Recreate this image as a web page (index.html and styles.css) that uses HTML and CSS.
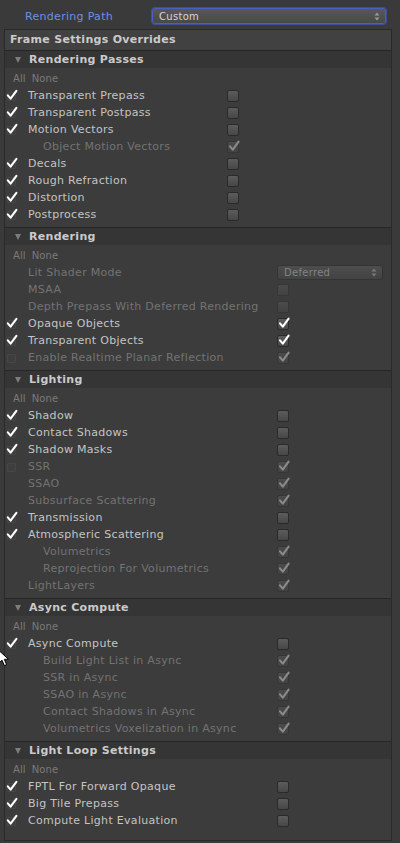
FILE: index.html
```html
<!DOCTYPE html>
<html>
<head>
<meta charset="utf-8">
<link rel="stylesheet" href="styles.css">
</head>
<body>
<div class="page">
  <div class="top">
    <span class="path-label">Rendering Path</span>
    <div class="select main"><span class="sel-text">Custom</span><svg class="arrows" width="6" height="9" viewBox="0 0 6 9"><path d="M3 0.5 L5.5 3.5 H0.5Z M3 8.5 L5.5 5.5 H0.5Z" fill="#9a9a9a"/></svg></div>
  </div>

  <div class="panel">
    <div class="panel-head">Frame Settings Overrides</div>

    <section class="sec s1">
      <div class="sec-head"><i class="tri"></i>Rendering Passes</div>
      <div class="allnone"><span>All</span><span>None</span></div>
      <div class="row"><span class="ov on"><svg viewBox="0 0 12 12"><path d="M1.8 6.4 L4.6 9.6 L10.4 1.8"/></svg></span><span class="lbl">Transparent Prepass</span><span class="cb"></span></div>
      <div class="row"><span class="ov on"><svg viewBox="0 0 12 12"><path d="M1.8 6.4 L4.6 9.6 L10.4 1.8"/></svg></span><span class="lbl">Transparent Postpass</span><span class="cb"></span></div>
      <div class="row"><span class="ov on"><svg viewBox="0 0 12 12"><path d="M1.8 6.4 L4.6 9.6 L10.4 1.8"/></svg></span><span class="lbl">Motion Vectors</span><span class="cb"></span></div>
      <div class="row dis"><span class="ov"></span><span class="lbl ind">Object Motion Vectors</span><span class="cb dim"><svg viewBox="0 0 14 14"><path d="M3 7.4 L5.8 10.6 L11.6 2.6"/></svg></span></div>
      <div class="row"><span class="ov on"><svg viewBox="0 0 12 12"><path d="M1.8 6.4 L4.6 9.6 L10.4 1.8"/></svg></span><span class="lbl">Decals</span><span class="cb"></span></div>
      <div class="row"><span class="ov on"><svg viewBox="0 0 12 12"><path d="M1.8 6.4 L4.6 9.6 L10.4 1.8"/></svg></span><span class="lbl">Rough Refraction</span><span class="cb"></span></div>
      <div class="row"><span class="ov on"><svg viewBox="0 0 12 12"><path d="M1.8 6.4 L4.6 9.6 L10.4 1.8"/></svg></span><span class="lbl">Distortion</span><span class="cb"></span></div>
      <div class="row"><span class="ov on"><svg viewBox="0 0 12 12"><path d="M1.8 6.4 L4.6 9.6 L10.4 1.8"/></svg></span><span class="lbl">Postprocess</span><span class="cb"></span></div>
    </section>

    <section class="sec">
      <div class="sec-head"><i class="tri"></i>Rendering</div>
      <div class="allnone"><span>All</span><span>None</span></div>
      <div class="row dis"><span class="ov"></span><span class="lbl">Lit Shader Mode</span><div class="select small"><span class="sel-text">Deferred</span><svg class="arrows" width="6" height="9" viewBox="0 0 6 9"><path d="M3 0.5 L5.5 3.5 H0.5Z M3 8.5 L5.5 5.5 H0.5Z" fill="#7a7a7a"/></svg></div></div>
      <div class="row dis"><span class="ov"></span><span class="lbl">MSAA</span><span class="cb dim"></span></div>
      <div class="row dis"><span class="ov"></span><span class="lbl">Depth Prepass With Deferred Rendering</span><span class="cb dim"></span></div>
      <div class="row"><span class="ov on"><svg viewBox="0 0 12 12"><path d="M1.8 6.4 L4.6 9.6 L10.4 1.8"/></svg></span><span class="lbl">Opaque Objects</span><span class="cb"><svg viewBox="0 0 14 14"><path d="M3 7.4 L5.8 10.6 L11.6 2.6"/></svg></span></div>
      <div class="row"><span class="ov on"><svg viewBox="0 0 12 12"><path d="M1.8 6.4 L4.6 9.6 L10.4 1.8"/></svg></span><span class="lbl">Transparent Objects</span><span class="cb"><svg viewBox="0 0 14 14"><path d="M3 7.4 L5.8 10.6 L11.6 2.6"/></svg></span></div>
      <div class="row dis"><span class="ov off"></span><span class="lbl">Enable Realtime Planar Reflection</span><span class="cb dim"><svg viewBox="0 0 14 14"><path d="M3 7.4 L5.8 10.6 L11.6 2.6"/></svg></span></div>
    </section>

    <section class="sec">
      <div class="sec-head"><i class="tri"></i>Lighting</div>
      <div class="allnone"><span>All</span><span>None</span></div>
      <div class="row"><span class="ov on"><svg viewBox="0 0 12 12"><path d="M1.8 6.4 L4.6 9.6 L10.4 1.8"/></svg></span><span class="lbl">Shadow</span><span class="cb"></span></div>
      <div class="row"><span class="ov on"><svg viewBox="0 0 12 12"><path d="M1.8 6.4 L4.6 9.6 L10.4 1.8"/></svg></span><span class="lbl">Contact Shadows</span><span class="cb"></span></div>
      <div class="row"><span class="ov on"><svg viewBox="0 0 12 12"><path d="M1.8 6.4 L4.6 9.6 L10.4 1.8"/></svg></span><span class="lbl">Shadow Masks</span><span class="cb"></span></div>
      <div class="row dis"><span class="ov off"></span><span class="lbl">SSR</span><span class="cb dim"><svg viewBox="0 0 14 14"><path d="M3 7.4 L5.8 10.6 L11.6 2.6"/></svg></span></div>
      <div class="row dis"><span class="ov"></span><span class="lbl">SSAO</span><span class="cb dim"><svg viewBox="0 0 14 14"><path d="M3 7.4 L5.8 10.6 L11.6 2.6"/></svg></span></div>
      <div class="row dis"><span class="ov"></span><span class="lbl">Subsurface Scattering</span><span class="cb dim"><svg viewBox="0 0 14 14"><path d="M3 7.4 L5.8 10.6 L11.6 2.6"/></svg></span></div>
      <div class="row"><span class="ov on"><svg viewBox="0 0 12 12"><path d="M1.8 6.4 L4.6 9.6 L10.4 1.8"/></svg></span><span class="lbl">Transmission</span><span class="cb"></span></div>
      <div class="row"><span class="ov on"><svg viewBox="0 0 12 12"><path d="M1.8 6.4 L4.6 9.6 L10.4 1.8"/></svg></span><span class="lbl">Atmospheric Scattering</span><span class="cb"></span></div>
      <div class="row dis"><span class="ov"></span><span class="lbl ind">Volumetrics</span><span class="cb dim"><svg viewBox="0 0 14 14"><path d="M3 7.4 L5.8 10.6 L11.6 2.6"/></svg></span></div>
      <div class="row dis"><span class="ov"></span><span class="lbl ind">Reprojection For Volumetrics</span><span class="cb dim"><svg viewBox="0 0 14 14"><path d="M3 7.4 L5.8 10.6 L11.6 2.6"/></svg></span></div>
      <div class="row dis"><span class="ov"></span><span class="lbl">LightLayers</span><span class="cb dim"><svg viewBox="0 0 14 14"><path d="M3 7.4 L5.8 10.6 L11.6 2.6"/></svg></span></div>
    </section>

    <section class="sec">
      <div class="sec-head"><i class="tri"></i>Async Compute</div>
      <div class="allnone"><span>All</span><span>None</span></div>
      <div class="row"><span class="ov on"><svg viewBox="0 0 12 12"><path d="M1.8 6.4 L4.6 9.6 L10.4 1.8"/></svg></span><span class="lbl">Async Compute</span><span class="cb"></span></div>
      <div class="row dis"><span class="ov"></span><span class="lbl ind">Build Light List in Async</span><span class="cb dim"><svg viewBox="0 0 14 14"><path d="M3 7.4 L5.8 10.6 L11.6 2.6"/></svg></span></div>
      <div class="row dis"><span class="ov"></span><span class="lbl ind">SSR in Async</span><span class="cb dim"><svg viewBox="0 0 14 14"><path d="M3 7.4 L5.8 10.6 L11.6 2.6"/></svg></span></div>
      <div class="row dis"><span class="ov"></span><span class="lbl ind">SSAO in Async</span><span class="cb dim"><svg viewBox="0 0 14 14"><path d="M3 7.4 L5.8 10.6 L11.6 2.6"/></svg></span></div>
      <div class="row dis"><span class="ov"></span><span class="lbl ind">Contact Shadows in Async</span><span class="cb dim"><svg viewBox="0 0 14 14"><path d="M3 7.4 L5.8 10.6 L11.6 2.6"/></svg></span></div>
      <div class="row dis"><span class="ov"></span><span class="lbl ind">Volumetrics Voxelization in Async</span><span class="cb dim"><svg viewBox="0 0 14 14"><path d="M3 7.4 L5.8 10.6 L11.6 2.6"/></svg></span></div>
    </section>

    <section class="sec last">
      <div class="sec-head"><i class="tri"></i>Light Loop Settings</div>
      <div class="allnone"><span>All</span><span>None</span></div>
      <div class="row"><span class="ov on"><svg viewBox="0 0 12 12"><path d="M1.8 6.4 L4.6 9.6 L10.4 1.8"/></svg></span><span class="lbl">FPTL For Forward Opaque</span><span class="cb"></span></div>
      <div class="row"><span class="ov on"><svg viewBox="0 0 12 12"><path d="M1.8 6.4 L4.6 9.6 L10.4 1.8"/></svg></span><span class="lbl">Big Tile Prepass</span><span class="cb"></span></div>
      <div class="row"><span class="ov on"><svg viewBox="0 0 12 12"><path d="M1.8 6.4 L4.6 9.6 L10.4 1.8"/></svg></span><span class="lbl">Compute Light Evaluation</span><span class="cb"></span></div>
    </section>
  </div>

  <svg class="cursor" width="12" height="18" viewBox="0 0 12 18"><path d="M-1 0.5 V13 L2 10.2 L4.4 15.6 L6.6 14.6 L4.3 9.4 L8.4 9.2 Z" fill="#ffffff" stroke="#000000" stroke-width="1"/></svg>
</div>
</body>
</html>
```

FILE: styles.css
```css
html, body {
  margin: 0;
  padding: 0;
  background: #3a3a3a;
}
body {
  font-family: "DejaVu Sans", "Liberation Sans", sans-serif;
  font-size: 11px;
  letter-spacing: 0.3px;
  color: #c4c4c4;
}
.page {
  position: relative;
  width: 400px;
  height: 843px;
  overflow: hidden;
  background: #3a3a3a;
}
.top {
  display: flex;
  align-items: center;
  height: 29px;
  padding-left: 25px;
  box-sizing: border-box;
  padding-top: 3px;
}
.path-label {
  width: 127px;
  color: #6f8fe4;
}
.select {
  display: flex;
  align-items: center;
  justify-content: space-between;
  box-sizing: border-box;
  border-radius: 3px;
  background: linear-gradient(#585858, #484848);
  border: 1px solid #2c2c2c;
  padding: 0 5px 0 6px;
}
.select.main {
  width: 234px;
  height: 16px;
  border: 1px solid #4a5fc0;
  box-shadow: 0 0 0 1px #3d4f9a;
  color: #d6d6d6;
  font-size: 10px;
}
.select.small {
  width: 106px;
  height: 15px;
  color: #838383;
  font-size: 10px;
  background: linear-gradient(#4d4d4d, #434343);
  border-color: #343434;
}
.panel {
  margin-left: 4px;
  width: 388px;
  height: 812px;
  box-sizing: border-box;
  border: 1px solid #2a2a2a;
  background: #3c3c3c;
}
.panel-head {
  height: 20px;
  line-height: 20px;
  padding-left: 5px;
  font-weight: bold;
  color: #cacaca;
  background: #414141;
}
.sec {
  border-top: 1px solid #262626;
  padding-bottom: 4px;
}
.sec-head {
  display: flex;
  align-items: center;
  gap: 8px;
  height: 17px;
  margin-bottom: 1px;
  padding-left: 10px;
  font-weight: bold;
  color: #cacaca;
  background: #353535;
}
.tri {
  width: 0;
  height: 0;
  border-left: 3.5px solid transparent;
  border-right: 3.5px solid transparent;
  border-top: 6px solid #7c7c7c;
}
.allnone {
  display: flex;
  gap: 6px;
  height: 18px;
  align-items: center;
  padding-left: 8px;
  font-size: 10px;
  letter-spacing: 0.1px;
  color: #7a7a7a;
}
.row {
  display: flex;
  align-items: center;
  height: 17px;
  padding-left: 2px;
}
.ov {
  position: relative;
  width: 21px;
  height: 17px;
  display: flex;
  align-items: center;
  flex: none;
}
.ov.on::before,
.ov.off::before {
  content: "";
  display: block;
  width: 9px;
  height: 9px;
  margin-left: 0;
  margin-top: 1px;
  box-sizing: border-box;
  border: 1px solid #464646;
  background: #3e3e3e;
  border-radius: 1px;
}
.ov svg {
  position: absolute;
  left: -1px;
  top: 2px;
  width: 12px;
  height: 12px;
  fill: none;
  stroke: #ffffff;
  stroke-width: 2.1;
  stroke-linecap: round;
  stroke-linejoin: round;
}
.lbl {
  width: 249px;
  flex: none;
  box-sizing: border-box;
  white-space: nowrap;
}
.s1 .lbl {
  width: 199px;
}
.lbl.ind {
  padding-left: 15px;
}
.row.dis .lbl {
  color: #737373;
}
.cb {
  position: relative;
  width: 12px;
  height: 12px;
  box-sizing: border-box;
  border: 1px solid #2a2a2a;
  border-radius: 2px;
  background: linear-gradient(#5c5c5c, #474747);
  flex: none;
}
.cb.dim {
  border-color: #363636;
  background: linear-gradient(#4b4b4b, #424242);
}
.cb svg {
  position: absolute;
  left: -1px;
  top: -3px;
  width: 14px;
  height: 14px;
  fill: none;
  stroke: #ffffff;
  stroke-width: 2.1;
  stroke-linecap: round;
  stroke-linejoin: round;
}
.cb.dim svg {
  stroke: #8a8a8a;
}
.cursor {
  position: absolute;
  left: 0;
  top: 650px;
}
```
